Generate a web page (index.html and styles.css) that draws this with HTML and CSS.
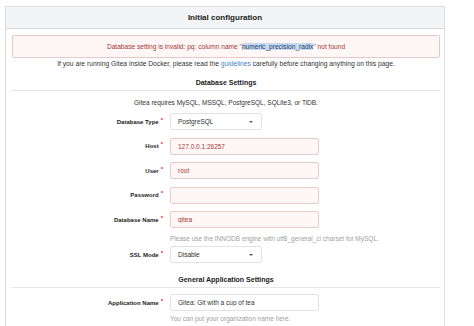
FILE: index.html
```html
<!DOCTYPE html>
<html>
	<head>
		<meta charset="utf-8">
		<link rel="stylesheet" href="styles.css">
		<title>Gitea: Installation</title>
	</head>
	<body>
		<div class="card">
			<div class="header">Initial configuration</div>
			<div class="content">
				<div class="error">Database setting is invalid: pq: column name "<span class="sel">numeric_precision_radix</span>" not found</div>
				<p class="center intro">If you are running Gitea inside Docker, please read the <a href="#">guidelines</a> carefully before changing anything on this page.</p>

				<h4 class="divider">Database Settings</h4>
				<p class="center note">Gitea requires MySQL, MSSQL, PostgreSQL, SQLite3, or TiDB.</p>

				<div class="field first">
					<label>Database Type<span class="req">*</span></label>
					<div class="dropdown">PostgreSQL<span class="caret"></span></div>
				</div>
				<div class="field">
					<label>Host<span class="req">*</span></label>
					<input class="bad" type="text" value="127.0.0.1:26257">
				</div>
				<div class="field">
					<label>User<span class="req">*</span></label>
					<input class="bad" type="text" value="root">
				</div>
				<div class="field">
					<label>Password<span class="req">*</span></label>
					<input class="bad" type="password" value="">
				</div>
				<div class="field">
					<label>Database Name<span class="req">*</span></label>
					<input class="bad" type="text" value="gitea">
				</div>
				<div class="help">Please use the INNODB engine with utf8_general_ci charset for MySQL.</div>
				<div class="field tight">
					<label>SSL Mode<span class="req">*</span></label>
					<div class="dropdown">Disable<span class="caret"></span></div>
				</div>

				<h4 class="divider second">General Application Settings</h4>
				<div class="field app">
					<label>Application Name<span class="req">*</span></label>
					<input type="text" value="Gitea: Git with a cup of tea">
				</div>
				<div class="help small">You can put your organization name here.</div>
			</div>
		</div>
	</body>
</html>
```
FILE: styles.css
```css
body { margin:0; background:#fff; font-family:"Liberation Sans", Arial, sans-serif; font-size:6.5px; color:#333; }
.card { box-sizing:border-box; width:440px; margin:6px 0 0 5px; border:1px solid #dedede; border-bottom:none; height:330px; }
.header { height:21px; line-height:21px; text-align:center; font-weight:bold; font-size:8px; color:#222; background:#f3f4f5; border-bottom:1px solid #d8d8d8; }
.content { padding:0 4px 0 6px; }
.error { margin-top:6px; height:21px; line-height:21px; text-align:center; background:#fff6f6; border:1px solid #e9c8c8; border-radius:2px; color:#9f3a38; font-size:6.6px; }
.sel { background:#c8daf0; color:#23406e; }
.center { margin:1px 0 0; line-height:10px; text-align:center; }
.intro { font-size:6.7px; }
a { color:#4183c4; text-decoration:none; }
.divider { margin:9px 0 0; padding-bottom:2px; line-height:10px; font-size:7px; text-align:center; border-bottom:1px solid #e6e6e6; color:#222; }
.divider.second { margin-top:12px; }
.note { margin-top:7px; }
.field { display:flex; align-items:center; margin-top:7.5px; height:17px; }
.field.first { margin-top:5px; }
.field.tight { margin-top:2px; }
.field.app { margin-top:6px; }
label { box-sizing:border-box; width:158px; padding-right:7px; text-align:right; font-weight:bold; font-size:6px; color:#222; }
.req { color:#db2828; font-size:6px; position:relative; top:-2px; margin-left:2px; }
input { box-sizing:border-box; width:149px; height:17px; margin:0; padding:0 7px; border:1px solid #e2e2e2; border-radius:2px; font-family:"Liberation Sans", Arial, sans-serif; font-size:6.5px; color:#333; background:#fff; outline:none; }
input.bad { background:#fff6f6; border-color:#eccaca; color:#9f3a38; }
.dropdown { box-sizing:border-box; width:92px; height:17px; line-height:15px; padding:0 7px; border:1px solid #e2e2e2; border-radius:2px; position:relative; }
.caret { position:absolute; right:8px; top:7px; border-left:2px solid transparent; border-right:2px solid transparent; border-top:2px solid #555; }
.help { margin:6px 0 0 158px; line-height:10px; color:#a0a0a0; }
.help.small { margin-top:3px; }
```
